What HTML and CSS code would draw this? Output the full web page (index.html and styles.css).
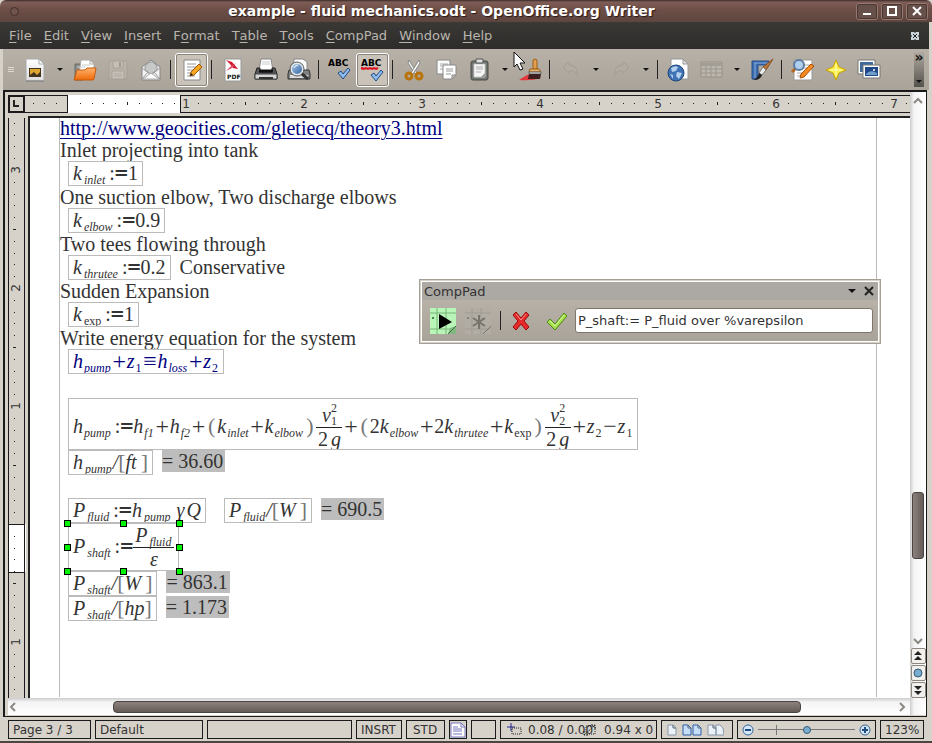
FILE: index.html
```html
<!DOCTYPE html>
<html lang="en">
<head>
<meta charset="utf-8">
<title>example - fluid mechanics.odt - OpenOffice.org Writer</title>
<link rel="stylesheet" href="styles.css">
</head>
<body>
<svg class="defs" aria-hidden="true">
  <defs>
    <linearGradient id="blue" x1="0" y1="0" x2="1" y2="1"><stop offset="0" stop-color="#b5d2f0"/><stop offset="1" stop-color="#265a9c"/></linearGradient>
    <linearGradient id="orange" x1="0" y1="0" x2="0" y2="1"><stop offset="0" stop-color="#ffb36b"/><stop offset="1" stop-color="#ee6a0a"/></linearGradient>
    <linearGradient id="paper" x1="0" y1="0" x2="0" y2="1"><stop offset="0" stop-color="#ffffff"/><stop offset="1" stop-color="#dcdcdc"/></linearGradient>
    <pattern id="inch" x="60" y="0" width="118" height="16" patternUnits="userSpaceOnUse">
      <g fill="#222"><path d="M12 8h1v1h-1zM24 8h1v1h-1zM35 8h1v1h-1zM47 8h1v1h-1zM71 8h1v1h-1zM83 8h1v1h-1zM94 8h1v1h-1zM106 8h1v1h-1z"/><path d="M59 7h1v3h-1z"/></g>
    </pattern>
    <pattern id="inchv" x="0" y="52" width="16" height="118" patternUnits="userSpaceOnUse">
      <g fill="#222"><path d="M6 12h1v1h-1zM6 24h1v1h-1zM6 35h1v1h-1zM6 47h1v1h-1zM6 71h1v1h-1zM6 83h1v1h-1zM6 94h1v1h-1zM6 106h1v1h-1z"/><path d="M5 59h3v1h-3z"/></g>
    </pattern>
    <symbol id="check" viewBox="0 0 14 12"><path d="M1 6l3-2 2 3 5-6 2 2-7 9z" fill="#8fbcee" stroke="#204a87"/></symbol>
  </defs>
</svg>

<header class="titlebar">
  <span class="winmenu"></span>
  <h1>example - fluid mechanics.odt - OpenOffice.org Writer</h1>
  <div class="winbtns">
    <button aria-label="Minimize"><svg width="10" height="10"><path d="M1 8h8" stroke="#fff" stroke-width="2"/></svg></button>
    <button aria-label="Maximize"><svg width="10" height="10"><path d="M1 1h8v8h-8z" fill="none" stroke="#fff" stroke-width="2"/></svg></button>
    <button aria-label="Close"><svg width="10" height="10"><path d="M1 1l8 8M9 1l-8 8" stroke="#fff" stroke-width="2"/></svg></button>
  </div>
</header>

<nav class="menubar">
  <button><u>F</u>ile</button><button><u>E</u>dit</button><button><u>V</u>iew</button><button><u>I</u>nsert</button><button>F<u>o</u>rmat</button><button>T<u>a</u>ble</button><button><u>T</u>ools</button><button><u>C</u>ompPad</button><button><u>W</u>indow</button><button><u>H</u>elp</button>
  <button class="closedoc" aria-label="Close document"><svg width="8" height="8"><rect width="8" height="8" fill="#ccd6dc"/><path d="M2 2l4 4M6 2l-4 4M0 4h1M7 4h1M4 0v1M4 7v1" stroke="#222"/></svg></button>
</nav>

<div class="toolbar">
  <span class="grip"></span>
  <button class="tool" aria-label="New"><svg width="24" height="24"><path d="M3 1h13l5 5v17H3z" fill="url(#paper)" stroke="#aaa"/><path d="M16 1v5h5z" fill="#fff" stroke="#aaa"/><rect x="6" y="10" width="12" height="9" fill="#443321"/><path d="M7 11h10v3l-3 3-3-3-4 3z" fill="#dca62f"/><path d="M3 23h18" stroke="#777"/></svg></button>
  <button class="drop" aria-label="New options"></button>
  <button class="tool" aria-label="Open"><svg width="24" height="24"><path d="M2 6h6l2 3v13H2z" fill="#8c8c88" stroke="#666"/><path d="M8 2h9l4 4v10H6z" fill="#fff" stroke="#aaa"/><path d="M17 2v4h4" fill="none" stroke="#aaa"/><path d="M4 9h8M9 7h8" stroke="#ccc"/><path d="M4 12h8l2-2h9l-2 11-1 1H1z" fill="url(#orange)" stroke="#c95a0a"/></svg></button>
  <button class="tool" aria-label="Save"><svg width="24" height="24" opacity=".5"><path d="M3 3h18v18H3z" fill="#c0bbb2" stroke="#a09b93"/><path d="M7 3h10v7H7z" fill="#d8d4cc" stroke="#a09b93"/><path d="M13 4h2v5h-2z" fill="#908b83"/><path d="M6 13h12v8H6z" fill="#dedad2" stroke="#a09b93"/><path d="M8 16h8M8 18h8" stroke="#aaa"/></svg></button>
  <button class="tool" aria-label="Mail document"><svg width="24" height="24"><path d="M3 9l9-7 9 7v13H3z" fill="#f4f4f4" stroke="#858585"/><path d="M6 8l5-4h3l4 4v4l-6 4-6-4z" fill="#c6c9c8" stroke="#999"/><path d="M3 21l6-7M21 21l-6-7M3 10l9 7 9-7" fill="none" stroke="#999"/><path d="M4 21l8-6 8 6z" fill="#fff" stroke="#aaa"/></svg></button>
  <span class="sep"></span>
  <button class="tool on" aria-label="Edit file"><svg width="24" height="24"><path d="M4 2h16v20H4z" fill="#fff" stroke="#888"/><path d="M7 6h9M7 9h10M7 12h7M7 15h5M7 18h8" stroke="#999"/><path d="M10 18l1-4 8-8 3 3-8 8z" fill="#f7a823" stroke="#9c5a08"/><path d="M10 18l1-3 2 2z" fill="#222"/></svg></button>
  <span class="sep"></span>
  <button class="tool" aria-label="Export as PDF"><svg width="24" height="24"><path d="M4 1h16v22H4z" fill="#fff" stroke="#999"/><path d="M5 2l6 2 6 7-5-1-3-4z" fill="#d5132b"/><path d="M15 5l-4 5-6 3 4-4z" fill="#e0506a"/><text x="6" y="21" class="pdf">PDF</text></svg></button>
  <button class="tool" aria-label="Print"><svg width="24" height="24"><path d="M7 1h10l2 12H5z" fill="#fff" stroke="#888"/><path d="M8 4h8M8 6h8" stroke="#ccc"/><path d="M3 10h3v4h12v-4h3l2 6v5H1v-5z" fill="#55575a" stroke="#222"/><path d="M5 13h14" stroke="#111" stroke-width="3"/><path d="M1 16h22v5H1z" fill="#d5d5d3" stroke="#444"/><path d="M5 20h14" stroke="#333" stroke-width="2"/></svg></button>
  <button class="tool" aria-label="Page preview"><svg width="24" height="24"><path d="M7 1h9l4 3v10H6z" fill="#fff" stroke="#888"/><path d="M2 12h20l1 4v5H1v-5z" fill="#808283" stroke="#333"/><path d="M3 17h18v3H3z" fill="#ddd"/><circle cx="10" cy="11" r="6" fill="url(#blue)" stroke="#e2e7ec" stroke-width="2"/><circle cx="10" cy="11" r="7" fill="none" stroke="#555"/><path d="M15 16l6 5" stroke="#333" stroke-width="3"/><path d="M7 10q1-3 4-3" stroke="#fff" fill="none"/></svg></button>
  <span class="sep"></span>
  <button class="tool" aria-label="Spelling"><svg width="24" height="24"><text x="0" y="8" class="abc">ABC</text><use href="#check" x="9" y="9" width="14" height="12"/></svg></button>
  <button class="tool on" aria-label="AutoSpellcheck"><svg width="24" height="24"><text x="0" y="8" class="abc">ABC</text><path d="M0 11l1-1 2 1 2-1 2 1 2-1 2 1 2-1 2 1 2-1" fill="none" stroke="#e01020" stroke-width="2"/><use href="#check" x="9" y="11" width="14" height="12"/></svg></button>
  <span class="sep"></span>
  <button class="tool" aria-label="Cut"><svg width="24" height="24"><path d="M7 2l8 13-2 1L6 5z" fill="#eee" stroke="#888"/><path d="M17 2L9 15l2 1 7-11z" fill="#fff" stroke="#888"/><circle cx="7" cy="18" r="3" fill="none" stroke="#b8730b" stroke-width="3"/><circle cx="17" cy="18" r="3" fill="none" stroke="#b8730b" stroke-width="3"/></svg></button>
  <button class="tool" aria-label="Copy"><svg width="24" height="24"><path d="M2 2h13v14H2z" fill="#fafafa" stroke="#888"/><path d="M5 6h8M5 8h8M5 11h6" stroke="#aaa"/><path d="M8 7h13v10l-4 4H8z" fill="#fff" stroke="#888"/><path d="M21 17h-4v4z" fill="#ccc" stroke="#888"/><path d="M11 11h7M11 13h7M11 16h5" stroke="#999"/></svg></button>
  <button class="tool" aria-label="Paste"><svg width="24" height="24"><rect x="3" y="3" width="17" height="19" rx="2" fill="#737771" stroke="#474a46"/><path d="M6 6h11v13H6z" fill="#f6f6f6" stroke="#ccc"/><path d="M8 1h7v4H8z" fill="#ddd" stroke="#555"/><path d="M8 9h7M8 11h7M8 14h5" stroke="#aaa"/><path d="M17 15l-4 4h4z" fill="#999"/></svg></button>
  <button class="drop" aria-label="Paste options"></button>
  <button class="tool" aria-label="Format paintbrush"><svg width="24" height="24"><path d="M1 22q8-6 13-6l8 4q-7 3-21 2z" fill="#e03a3e"/><path d="M15 2q2-2 4 0v9h-4z" fill="#e3a150" stroke="#9b5d16"/><path d="M12 11h9l2 3H11z" fill="#e9b56c" stroke="#9b5d16"/><path d="M11 14h12v2H11z" fill="#ddd" stroke="#666"/><path d="M11 16h12l-1 5H10z" fill="#3d2020"/></svg></button>
  <span class="sep"></span>
  <button class="tool" aria-label="Undo"><svg width="24" height="24"><path d="M4 9l6-5v3q9 0 8 10-2-5-8-4v3z" fill="#b2aca2" stroke="#a39d93"/></svg></button>
  <button class="drop" aria-label="Undo list"></button>
  <button class="tool" aria-label="Redo"><svg width="24" height="24"><path d="M20 9l-6-5v3q-9 0-8 10 2-5 8-4v3z" fill="#b2aca2" stroke="#a39d93"/></svg></button>
  <button class="drop" aria-label="Redo list"></button>
  <span class="sep"></span>
  <button class="tool" aria-label="Hyperlink"><svg width="24" height="24"><path d="M4 1h12l5 5v15H4z" fill="#fff" stroke="#999"/><path d="M16 1v5h5z" fill="#ddd" stroke="#999"/><circle cx="9" cy="15" r="8" fill="#3f73b5" stroke="#1f4679"/><path d="M4 10q4-3 7-1l-2 4-4 1zM10 14l5 1-3 6-3-3zM3 16l3 1v4z" fill="#b5d0ee"/></svg></button>
  <button class="tool" aria-label="Table"><svg width="24" height="24"><path d="M1 4h21v15H1z" fill="#bcb7ae" stroke="#969087"/><path d="M1 5h21v3H1z" fill="#a29d95"/><path d="M1 11h21M1 15h21M6 8v11M11 8v11M16 8v11" stroke="#9b958c"/></svg></button>
  <button class="drop" aria-label="Table size"></button>
  <button class="tool" aria-label="Show draw functions"><svg width="24" height="24"><path d="M2 3h17v4H8v14H2z" fill="#3b6db0" stroke="#26508a"/><path d="M4 5h14M5 5v15" stroke="#88abd8"/><path d="M23 1l-7 11-3-3z" fill="#b9773b" stroke="#875021"/><path d="M16 12l-4 5-3-2 4-6z" fill="#eee" stroke="#777"/><path d="M9 15l3 2q-1 5-9 5 5-2 6-7z" fill="#222"/></svg></button>
  <span class="sep"></span>
  <button class="tool" aria-label="Find and replace"><svg width="24" height="24"><path d="M3 2h18v20H3z" fill="#fff" stroke="#999"/><path d="M11 7h8M12 10h6M6 15h6M6 18h5" stroke="#aaa"/><path d="M5 10l-4 4" stroke="#b56520" stroke-width="3"/><circle cx="8" cy="7" r="5" fill="#b0cfee" stroke="#5d7ca1" stroke-width="2"/><path d="M9 20l1-4L20 6l3 2-10 11z" fill="#f58a25" stroke="#aa5007"/></svg></button>
  <button class="tool" aria-label="Navigator"><svg width="24" height="24"><path d="M12 2l3 7 7 3-7 3-3 7-3-7-7-3 7-3z" fill="#fff04a" stroke="#c9a500"/><path d="M12 6v12M6 12h12" stroke="#fffbc5"/></svg></button>
  <button class="tool" aria-label="Gallery"><svg width="24" height="24"><path d="M1 2h17v14H1z" fill="#fff" stroke="#777"/><path d="M3 4h13v10H3z" fill="#416a9c"/><path d="M6 7h17v13H6z" fill="#fff" stroke="#777"/><path d="M8 9h13v9H8z" fill="#204a87"/><path d="M9 16q4-5 11-1v2H9z" fill="#709dcb"/><circle cx="17" cy="12" r="1" fill="#fff"/></svg></button>
  <button class="more" aria-label="More tools"><span>»</span><i class="tri"></i></button>
</div>

<main class="work">
  <div class="hruler">
    <span class="tab"><svg width="13" height="14"><path d="M4 3v6h5" fill="none" stroke="#222" stroke-width="2"/></svg></span>
    <svg class="hticks" height="18" aria-hidden="true">
      <rect width="100%" height="18" fill="#d6d2ca"/>
      <path d="M0 0h3000M0 18h3000" stroke="#1a1a1a" stroke-width="2"/>
      <rect x="43" y="0" width="112" height="18" fill="#fff"/>
      <path d="M42 0h1v18h-1zM155 0h1v18h-1z" fill="#1a1a1a"/>
      <rect class="hpat" x="0" y="1" width="110%" height="15"/>
      <g class="rnum"><text x="161" y="13">1</text><text x="279" y="13">2</text><text x="397" y="13">3</text><text x="515" y="13">4</text><text x="633" y="13">5</text><text x="751" y="13">6</text><text x="869" y="13">7</text></g>
    </svg>
  </div>
  <div class="vruler">
    <svg width="18" height="100%" aria-hidden="true">
      <rect width="18" height="100%" fill="#d6d2ca"/>
      <rect x="0" y="406" width="18" height="48" fill="#fff"/>
      <path d="M0 0h1v2000h-1zM16 0h1v2000h-1z" fill="#1a1a1a"/>
      <path d="M0 406h17v1h-17zM0 454h17v1h-17z" fill="#1a1a1a"/>
      <rect class="vpat" x="2" width="14" height="100%"/>
      <g class="rnum"><text transform="translate(12 52) rotate(-90)">3</text><text transform="translate(12 170) rotate(-90)">2</text><text transform="translate(12 288) rotate(-90)">1</text><text transform="translate(12 524) rotate(-90)">1</text></g>
    </svg>
  </div>
  <article class="page">
    <div class="body">
      <p class="t"><a href="http://www.geocities.com/gletiecq/theory3.html">http://www.geocities.com/gletiecq/theory3.html</a></p>
      <p class="t">Inlet projecting into tank</p>
      <div class="f"><span class="eq"><i>k</i><sub>inlet</sub><b>:</b><em>=</em>1</span></div>
      <p class="t">One suction elbow, Two discharge elbows</p>
      <div class="f"><span class="eq"><i>k</i><sub>elbow</sub><b>:</b><em>=</em>0.9</span></div>
      <p class="t">Two tees flowing through</p>
      <div class="f"><span class="eq"><i>k</i><sub>thrutee</sub><b>:</b><em>=</em>0.2</span><span class="note">Conservative</span></div>
      <p class="t">Sudden Expansion</p>
      <div class="f"><span class="eq"><i>k</i><sub class="up">exp</sub><b>:</b><em>=</em>1</span></div>
      <p class="t">Write energy equation for the system</p>
      <div class="f"><span class="eq link"><i>h</i><sub>pump</sub><s>+</s><i>z</i><sub class="up">1</sub><s>≡</s><i>h</i><sub>loss</sub><s>+</s><i>z</i><sub class="up">2</sub></span></div>
      <p class="t gap"></p>
      <div class="f"><span class="eq tall"><i>h</i><sub>pump</sub><b>:</b><em>=</em><i>h</i><sub>f1</sub><s>+</s><i>h</i><sub>f2</sub><s>+</s><q>(</q><i>k</i><sub>inlet</sub><s>+</s><i>k</i><sub>elbow</sub><q>)</q><span class="frac"><span class="num"><i>v</i><span class="ss"><span>2</span><span>1</span></span></span><span class="den">2<i>g</i></span></span><s>+</s><q>(</q>2<i>k</i><sub>elbow</sub><s>+</s>2<i>k</i><sub>thrutee</sub><s>+</s><i>k</i><sub class="up">exp</sub><q>)</q><span class="frac"><span class="num"><i>v</i><span class="ss"><span>2</span><span>2</span></span></span><span class="den">2<i>g</i></span></span><s>+</s><i>z</i><sub class="up">2</sub><s>−</s><i>z</i><sub class="up">1</sub></span></div>
      <div class="f"><span class="eq"><i>h</i><sub>pump</sub><i>/</i><q>[</q><i>ft</i><q class="r">]</q></span><mark>= 36.60</mark></div>
      <p class="t blank"></p>
      <div class="f"><span class="eq"><i>P</i><sub>fluid</sub><b>:</b><em>=</em><i>h</i><sub>pump</sub><i class="greek">γ</i><i>Q</i></span><span class="eq second"><i>P</i><sub>fluid</sub><i>/</i><q>[</q><i>W</i><q class="r">]</q></span><mark>= 690.5</mark></div>
      <div class="f top"><span class="eq picked"><i>P</i><sub>shaft</sub><b>:</b><em>=</em><span class="frac"><span class="num"><i>P</i><sub>fluid</sub></span><span class="den"><i>ε</i></span></span></span><span class="handles"><span></span><span></span><span></span><span></span><span class="none"></span><span></span><span></span><span></span><span></span></span></div>
      <div class="f"><span class="eq"><i>P</i><sub>shaft</sub><i>/</i><q>[</q><i>W</i><q class="r">]</q></span><mark>= 863.1</mark></div>
      <div class="f"><span class="eq"><i>P</i><sub>shaft</sub><i>/</i><q>[</q><i>hp</i><q>]</q></span><mark>= 1.173</mark></div>
    </div>
  </article>
  <div class="vscroll">
    <svg class="arr" width="10" height="8"><path d="M1 6l4-4 4 4" fill="none" stroke="#8c8884" stroke-width="2"/></svg>
    <div class="vtrack"><span class="vthumb"></span></div>
    <svg class="arr" width="10" height="8"><path d="M1 2l4 4 4-4" fill="none" stroke="#8c8884" stroke-width="2"/></svg>
    <button aria-label="Previous page"><svg width="10" height="10"><path d="M5 0l4 4H1zM5 5l4 4H1z" fill="#222"/></svg></button>
    <button aria-label="Navigation"><svg width="10" height="10"><circle cx="5" cy="5" r="4" fill="#79add0" stroke="#345a77"/></svg></button>
    <button aria-label="Next page"><svg width="10" height="10"><path d="M5 5L1 1h8zM5 10L1 6h8z" fill="#222"/></svg></button>
  </div>
  <div class="hscroll">
    <svg width="8" height="10"><path d="M6 1L2 5l4 4" fill="none" stroke="#8c8884" stroke-width="2"/></svg>
    <div class="htrack"><span class="hthumb"></span></div>
    <svg width="8" height="10"><path d="M2 1l4 4-4 4" fill="none" stroke="#8c8884" stroke-width="2"/></svg>
  </div>
</main>

<section class="comppad" aria-label="CompPad">
  <div class="cphead"><h2>CompPad</h2><button aria-label="Menu"><i class="tri"></i></button><button aria-label="Close"><svg width="10" height="10"><path d="M1 1l8 8M9 1l-8 8" stroke="#222" stroke-width="2"/></svg></button></div>
  <div class="cpbody">
    <button aria-label="Run"><svg width="26" height="26"><path d="M0 0h26v26H0z" fill="#b9f4b9"/><path d="M0 5h26M0 21h26M7 0v26M16 0v26" stroke="#77b777"/><circle cx="3" cy="10" r="1" fill="#286028"/><path d="M9 6l13 8-13 7z" fill="#000"/><path d="M18 26l2-6 6-2v8z" fill="#82b782"/><path d="M18 26l8-8" stroke="#3d763d"/></svg></button>
    <button aria-label="Evaluate all" disabled><svg width="26" height="26"><path d="M0 0h26v26H0z" fill="#b1aca4"/><path d="M0 5h26M0 21h26M7 0v26M16 0v26" stroke="#a09b94"/><circle cx="3" cy="10" r="1" fill="#77736d"/><path d="M14 7v14M8 10l12 8M20 10L8 18" stroke="#77736d" stroke-width="2"/><path d="M18 26l8-8" stroke="#77736d"/></svg></button>
    <span class="bar"></span>
    <button aria-label="Cancel"><svg width="20" height="20"><path d="M2 4l3-3 5 6 5-6 3 3-5 6 5 6-3 3-5-6-5 6-3-3 5-6z" fill="#e82a2a" stroke="#9a0b0b"/><path d="M5 3l5 6 5-6" stroke="#ff8a8a" fill="none"/></svg></button>
    <button aria-label="Accept"><svg width="22" height="20"><path d="M1 11l3-3 5 5L18 2l3 3L9 19z" fill="#a6e04c" stroke="#4b8a10"/><path d="M4 10l5 5L18 4" stroke="#d6f7a0" fill="none"/></svg></button>
    <input type="text" aria-label="Expression" value="P_shaft:= P_fluid over %varepsilon">
  </div>
</section>

<svg class="cursor" width="14" height="20" aria-hidden="true"><path d="M1 1v15l3-3 3 6 3-1-3-6h5z" fill="#fff" stroke="#111"/></svg>

<footer class="status">
  <span class="cell c-page">Page 3 / 3</span>
  <span class="cell c-style">Default</span>
  <span class="cell c-grow"></span>
  <span class="cell c-ins">INSRT</span>
  <span class="cell c-std">STD</span>
  <span class="cell c-doc"><svg width="16" height="16"><path d="M1 1h10l4 4v10H1z" fill="#fff" stroke="#7777bb"/><path d="M11 1v4h4M3 5h5M3 7h9M3 9h9M3 12h9" fill="none" stroke="#7777bb"/></svg></span>
  <span class="cell c-sig"></span>
  <span class="cell c-pos"><svg width="16" height="14"><path d="M0 4h8M4 0v8" stroke="#22228a"/><path d="M5 5h9v6H5z" fill="none" stroke="#222" stroke-dasharray="1 1"/></svg><span class="xy">0.08 / 0.00</span><svg class="size" width="14" height="12"><path d="M3 2h9v8H3z" fill="none" stroke="#222" stroke-dasharray="1 1"/><path d="M1 11l10-9M8 1h4v4M1 7v4h4" fill="none" stroke="#222" stroke-dasharray="2 1"/></svg><span>0.94 x 0</span></span>
  <span class="cell c-view"><svg width="58" height="14"><g fill="#eaf1f8" stroke="#8898a8"><path d="M2 2h5l3 3v7H2z"/><path d="M42 2h5l3 3v7h-8zM58 12h-8V2h4l3 3z"/></g><g fill="#c6defa" stroke="#2c5fa3"><path d="M17 2h5l3 3v7h-8zM27 2h5l3 3v7h-8z"/></g><path d="M7 2v3h3M22 2v3h3M32 2v3h3M47 2v3h3" fill="none" stroke="#567"/></svg></span>
  <span class="cell c-zoom"><svg width="12" height="12"><circle cx="6" cy="6" r="5" fill="#d4e6f8" stroke="#3a6797"/><path d="M3 6h6" stroke="#1d4c80" stroke-width="2"/></svg><input type="range" aria-label="Zoom" min="0" max="100" value="51"><svg width="12" height="12"><circle cx="6" cy="6" r="5" fill="#d4e6f8" stroke="#3a6797"/><path d="M3 6h6M6 3v6" stroke="#1d4c80" stroke-width="2"/></svg></span>
  <span class="cell c-pct">123%</span>
</footer>
</body>
</html>
```
FILE: styles.css
```css
* { box-sizing: border-box; }
html, body { height: 100%; }
body {
  margin: 0;
  display: flex;
  flex-direction: column;
  background: #d6d2ca;
  font-family: "DejaVu Sans", sans-serif;
  font-size: 13px;
  color: #333;
  position: relative;
  overflow: hidden;
}
button { border: 0; background: none; padding: 0; margin: 0; font: inherit; color: inherit; display: flex; align-items: center; justify-content: center; }
h1, h2, p { margin: 0; }
svg { display: block; flex: none; }
.defs { position: absolute; width: 0; height: 0; }

.titlebar {
  flex: none;
  height: 22px;
  display: flex;
  align-items: center;
  padding: 0 4px 0 10px;
  background: linear-gradient(#3a2a27, #7d5d55 2px, #6d4e47 10px, #5d4540);
  border-radius: 6px 6px 0 0;
}
.titlebar h1 { flex: 1; text-align: center; padding-left: 8px; font-size: 14px; line-height: 20px; color: #fff; text-shadow: 1px 1px 1px #2a1815; }
.winmenu { width: 9px; height: 9px; border: 1px solid #403029; border-radius: 50%; background: #71534b; }
.winbtns { display: flex; gap: 3px; }
.winbtns button { width: 22px; height: 17px; border: 1px solid #967a72; outline: 1px solid #4b3731; outline-offset: -2px; border-radius: 3px; background: #68504a; }

.menubar {
  flex: none;
  height: 27px;
  display: flex;
  align-items: center;
  gap: 12px;
  padding: 0 10px 0 9px;
  margin: 0 3px 0 0;
  background: linear-gradient(#3a3936, #2d2c2a);
  color: #b9b5ae;
}
.menubar u { text-underline-offset: 2px; }
.closedoc { margin-left: auto; }

.toolbar {
  flex: none;
  height: 41px;
  display: flex;
  align-items: center;
  padding: 0 5px;
  margin: 0 3px;
  background: linear-gradient(#b8b1a7, #aaa399);
}
.grip { width: 6px; height: 5px; margin-right: 4px; background: repeating-linear-gradient(#ddd8d0 0 1px, transparent 1px 2px); }
.tool { width: 33px; height: 34px; flex: none; }
.tool.on { border: 1px solid #fff; border-radius: 3px; background: #c9c3b9; outline: 1px solid #8c857a; outline-offset: -2px; }
.drop { width: 17px; height: 34px; flex: none; }
.drop::before, .tri { content: ""; border: 3px solid transparent; border-top-color: #111; border-bottom: 0; }
.sep { width: 8px; height: 19px; flex: none; background: linear-gradient(#222, #222) 3px 0 / 1px 100% no-repeat; }
.more { margin-left: auto; width: 10px; height: 35px; flex-direction: column; justify-content: space-between; padding-bottom: 4px; color: #111; background: linear-gradient(#b0aaa1, #55514c); font-weight: bold; font-size: 14px; line-height: 10px; }
.pdf { font: bold 6px "DejaVu Sans", sans-serif; fill: #111; }
.abc { font: bold 9px "DejaVu Sans", sans-serif; fill: #000; }

.work {
  flex: 1;
  min-height: 0;
  margin: 0 5px 0 3px;
  border: 2px solid #1a1a1a;
  border-bottom-width: 1px;
  border-right-width: 1px;
  padding: 0 0 1px 3px;
  display: grid;
  grid-template-columns: 18px 3px 1fr 16px;
  grid-template-rows: 22px 4px 1fr 17px;
  background: #d6d2ca;
}
.hruler { grid-area: 1 / 1 / 2 / 4; display: flex; align-items: end; height: 21px; }
.tab { width: 17px; height: 18px; flex: none; border: 2px solid #1a1a1a; }
.hticks { flex: 1; min-width: 0; }
.hpat { fill: url(#inch); transform: translateX(-17px); }
.vpat { fill: url(#inchv); }
.rnum { font-size: 12px; fill: #333; text-anchor: middle; }
.vruler { grid-area: 3 / 1 / 4 / 2; overflow: hidden; }
.vruler svg { height: 100%; }
.page {
  grid-area: 2 / 3 / 4 / 4;
  margin-top: 2px;
  border-top: 2px solid #222;
  border-left: 2px solid #222;
  margin-left: -1px;
  background: #fff;
  overflow: hidden;
}
.body {
  margin: -1px 33px 0 29px;
  height: 100%;
  border: 1px solid #bbb;
  border-width: 0 1px;
  font-family: "Liberation Serif", serif;
  font-size: 20px;
}
.t { height: 22px; line-height: 22px; white-space: nowrap; }
.t.gap { height: 24px; }
.t.blank { height: 23px; }
.t a { color: #000080; text-decoration-thickness: 1px; text-underline-offset: 3px; }
.f { display: flex; align-items: start; position: relative; padding-left: 8px; }
.f.top { z-index: 1; }
.eq { display: flex; align-items: center; height: 25px; padding: 0 4px 2px; border: 1px solid #bbb; line-height: 22px; overflow: hidden; white-space: nowrap; }
.eq sub { font-size: 12px; font-style: italic; line-height: 12px; vertical-align: baseline; padding: 0 1px 0 2px; margin-top: 14px; }
.eq sub.up { font-style: normal; }
.eq b { font-weight: normal; padding-left: 3px; }
.eq em { font: bold 18px/22px "DejaVu Sans", sans-serif; margin: 0 -1px; }
.eq s { text-decoration: none; font-size: 24px; width: 15px; text-align: center; }
.eq q { quotes: none; color: #777; font-size: 22px; }
.eq q.r { padding-left: 4px; }
.greek { padding: 0 2px 0 5px; }
.eq.link { color: #000080; }
.link sub { padding: 0 1px; }
.note { line-height: 25px; padding-left: 9px; }
.second { margin-left: 18px; }
mark { height: 22px; line-height: 22px; margin-left: 9px; padding: 0 2px 0 0; background: #bdbdbd; color: #333; }
.eq.tall { height: 52px; padding-top: 4px; padding-bottom: 0; }
.tall sub { padding: 0 1px; }
.tall q { padding: 0 2px; }
.frac { display: flex; flex-direction: column; align-items: stretch; min-width: 26px; }
.num { display: flex; align-items: center; justify-content: center; height: 26px; border-bottom: 1px solid #222; padding: 0 2px; }
.den { text-align: center; height: 22px; }
.tall .den { display: flex; justify-content: center; gap: 3px; }
.tall .frac { margin: 0 1px; }
.ss { display: flex; flex-direction: column; font-size: 12px; line-height: 13px; }
.eq.picked { height: 48px; }
.handles {
  position: absolute;
  left: 4px;
  top: -3px;
  width: 119px;
  height: 55px;
  display: grid;
  grid-template-columns: repeat(3, 7px);
  justify-content: space-between;
  align-content: space-between;
}
.handles span { height: 7px; border: 1px solid #000; background: #00f400; }
.handles .none { visibility: hidden; }

.vscroll { grid-area: 1 / 4 / 5 / 5; display: flex; flex-direction: column; align-items: center; gap: 1px; padding: 3px 0 17px; background: linear-gradient(90deg, #ccc, #f4f4f4 4px, #fff); }
.vscroll .arr { margin: 2px 0; }
.vtrack { flex: 1; display: flex; flex-direction: column; width: 12px; padding-top: 384px; }
.vthumb { height: 67px; border-radius: 3px; border: 1px solid #4a4442; background: linear-gradient(90deg, #8b817d, #655c58); }
.vscroll button { width: 15px; height: 16px; border: 1px solid #8d8780; border-radius: 2px; background: #f2f0ed; }
.hscroll { grid-area: 4 / 1 / 5 / 4; display: flex; align-items: center; padding: 0 4px 0 1px; background: linear-gradient(#ccc, #f4f4f4 4px, #fff); }
.htrack { flex: 1; }
.hthumb { display: block; height: 12px; margin: 0 11% 0 96px; border-radius: 4px; border: 1px solid #4a4442; background: linear-gradient(#8b817d, #655c58); }

.comppad { position: absolute; left: 419px; top: 279px; width: 462px; height: 65px; border: 1px solid #a59f98; outline: 1px solid #fff; outline-offset: -3px; padding: 2px; background: #d6d2ca; display: flex; flex-direction: column; }
.cphead { flex: none; height: 18px; display: flex; align-items: center; gap: 8px; padding: 0 4px 0 2px; background: #aca8a3; }
.cphead h2 { flex: 1; font-size: 13px; font-weight: normal; }
.cphead .tri { border-width: 4px 4px 0; }
.cpbody { flex: 1; display: flex; align-items: center; padding: 0 5px 0 8px; background: linear-gradient(#b8b1a7, #aaa399); }
.cpbody button { margin-right: 9px; }
.bar { width: 1px; height: 19px; background: #222; margin-right: 10px; }
.cpbody button:nth-of-type(3) { margin-right: 15px; }
.cpbody button:nth-of-type(4) { margin-right: 7px; }
.cpbody input { flex: 1; min-width: 0; height: 25px; border: 1px solid #7d766d; border-radius: 3px; padding: 0 2px; font: 13px "DejaVu Sans", sans-serif; color: #333; background: #fff; }
.cursor { position: absolute; left: 513px; top: 51px; }

.status { flex: none; height: 26px; display: flex; align-items: start; gap: 4px; padding: 3px 8px; border-bottom: 2px solid #4d4540; }
.cell { height: 19px; flex: none; display: flex; align-items: center; border: 1px solid #1a1a1a; padding: 0 4px; font-size: 12px; white-space: nowrap; overflow: hidden; }
.c-page { width: 83px; }
.c-style { width: 108px; }
.c-grow { flex: 1; }
.c-ins { width: 46px; }
.c-std { width: 39px; padding-left: 6px; }
.c-doc { width: 18px; padding: 0; }
.c-sig { width: 25px; }
.c-pos { width: 157px; padding: 0 0 0 6px; }
.xy { padding-left: 5px; }
.size { margin: 0 7px 0 -10px; }
.c-view { width: 72px; }
.c-zoom { width: 139px; gap: 4px; }
.c-zoom input { flex: 1; min-width: 0; margin: 0; height: 14px; appearance: none; background: linear-gradient(#777, #777) 18px 50% / 1px 10px no-repeat, linear-gradient(#777, #777) 0 50% / 100% 1px no-repeat; }
.c-zoom input::-webkit-slider-thumb { appearance: none; width: 8px; height: 8px; border-radius: 50%; border: 1px solid #345a77; background: #79add0; }
.c-pct { width: 44px; }
```
